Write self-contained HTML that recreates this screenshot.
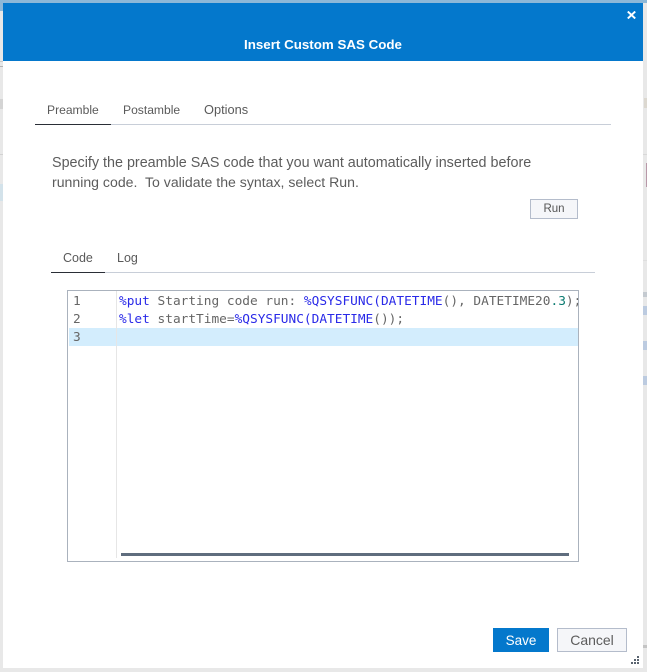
<!DOCTYPE html>
<html>
<head>
<meta charset="utf-8">
<style>
html,body{margin:0;padding:0;width:647px;height:672px;overflow:hidden;background:#e8e8e8;}
body{position:relative;font-family:"Liberation Sans",sans-serif;color:#555;}
.a{position:absolute;white-space:pre;}
.code{font-family:"DejaVu Sans Mono","Liberation Mono",monospace;font-size:12.8px;line-height:18px;height:18px;color:#666;}
.b{color:#2a2ae8;}
.t{color:#0a7a70;}
</style>
</head>
<body>
<!-- backdrop -->
<div class="a" style="left:0;top:0;width:647px;height:3px;background:#8db8d8;"></div>
<div class="a" style="left:0;top:3px;width:3px;height:8px;background:#8db8d8;"></div>
<div class="a" style="left:0;top:61px;width:3px;height:1px;background:#c8c8c8;"></div>
<div class="a" style="left:0;top:66px;width:3px;height:1px;background:#b4b4b4;"></div>
<div class="a" style="left:0;top:99px;width:3px;height:10px;background:#d4d4d4;"></div>
<div class="a" style="left:0;top:154px;width:3px;height:1px;background:#d2d2d2;"></div>
<div class="a" style="left:0;top:184px;width:3px;height:17px;background:#d3e2ea;"></div>
<div class="a" style="left:644px;top:98px;width:3px;height:10px;background:#dcd8d0;"></div>
<div class="a" style="left:643px;top:154px;width:4px;height:1px;background:#d8d8d8;"></div>
<div class="a" style="left:646px;top:163px;width:1px;height:24px;background:#b898a8;"></div>
<div class="a" style="left:643px;top:260px;width:4px;height:1px;background:#dedede;"></div>
<div class="a" style="left:643px;top:292px;width:4px;height:5px;background:#c4cad0;"></div>
<div class="a" style="left:643px;top:306px;width:4px;height:9px;background:#bccbe0;"></div>
<div class="a" style="left:643px;top:341px;width:4px;height:9px;background:#bccbe0;"></div>
<div class="a" style="left:643px;top:376px;width:4px;height:9px;background:#bccbe0;"></div>
<div class="a" style="left:643px;top:645px;width:4px;height:3px;background:#c4c4c4;"></div>

<!-- dialog -->
<div class="a" style="left:3px;top:3px;width:640px;height:665px;background:#fff;"></div>
<div class="a" style="left:3px;top:3px;width:640px;height:58px;background:#0478cc;"></div>
<div class="a" style="left:3px;top:37px;width:640px;text-align:center;color:#fff;font-weight:bold;font-size:13.35px;line-height:16px;">Insert Custom SAS Code</div>
<svg class="a" style="left:627px;top:11px;" width="9" height="8" viewBox="0 0 9 8"><path d="M0.8 0.5L8.2 7.5M8.2 0.5L0.8 7.5" stroke="#fff" stroke-width="1.9" fill="none"/></svg>

<!-- top tabs -->
<div class="a" style="left:47px;top:102px;font-size:12.1px;line-height:16px;color:#5a5a5a;">Preamble</div>
<div class="a" style="left:123px;top:102px;font-size:12.1px;line-height:16px;color:#5a5a5a;">Postamble</div>
<div class="a" style="left:204px;top:102px;font-size:12.8px;line-height:16px;color:#5a5a5a;">Options</div>
<div class="a" style="left:35px;top:124px;width:576px;height:1px;background:#c8ced8;"></div>
<div class="a" style="left:35px;top:124px;width:76px;height:1px;background:#2a2e36;"></div>

<!-- description -->
<div class="a" style="left:52px;top:153px;font-size:14.35px;line-height:20px;color:#5c5c5c;">Specify the preamble SAS code that you want automatically inserted before</div>
<div class="a" style="left:52px;top:172px;font-size:14.1px;line-height:20px;color:#5c5c5c;">running code.  To validate the syntax, select Run.</div>

<!-- Run -->
<div class="a" style="left:530px;top:199px;width:46px;height:18px;border:1px solid #b4bccb;background:#f5f6f9;text-align:center;font-size:11.5px;line-height:19px;color:#555;">Run</div>

<!-- lower tabs -->
<div class="a" style="left:63px;top:250px;font-size:12.5px;line-height:16px;color:#5a5a5a;">Code</div>
<div class="a" style="left:117px;top:250px;font-size:12.5px;line-height:16px;color:#5a5a5a;">Log</div>
<div class="a" style="left:51px;top:272px;width:544px;height:1px;background:#c8ced8;"></div>
<div class="a" style="left:51px;top:272px;width:54px;height:1px;background:#2a2e36;"></div>

<!-- editor -->
<div class="a" style="left:67px;top:290px;width:510px;height:270px;border:1px solid #aab2bd;background:#fff;overflow:hidden;">
  <div class="a" style="left:1px;top:37px;width:509px;height:18px;background:#d3edfd;"></div>
  <div class="a" style="left:48px;top:0;width:1px;height:267px;background:#e6e6e6;"></div>
  <div class="a code" style="left:5px;top:2px;">1</div>
  <div class="a code" style="left:5px;top:20px;">2</div>
  <div class="a code" style="left:5px;top:38px;">3</div>
  <div class="a code" style="left:51px;top:2px;"><span class="b">%put</span> Starting code run: <span class="b">%QSYSFUNC(DATETIME</span>(), DATETIME20<span class="t">.3</span>);</div>
  <div class="a code" style="left:51px;top:20px;"><span class="b">%let</span> startTime=<span class="b">%QSYSFUNC(DATETIME</span>());</div>
  <div class="a" style="left:53px;top:262px;width:448px;height:3px;background:#5f6d7e;"></div>
</div>

<!-- footer -->
<div class="a" style="left:493px;top:628px;width:56px;height:24px;background:#0478cc;color:#fff;text-align:center;font-size:13.5px;line-height:25px;">Save</div>
<div class="a" style="left:557px;top:628px;width:68px;height:22px;border:1px solid #b4bccb;background:#f5f6f9;color:#5c5c5c;text-align:center;font-size:14px;line-height:22px;">Cancel</div>

<!-- resize grip -->
<svg class="a" style="left:631px;top:656px;" width="9" height="9" viewBox="0 0 9 9" fill="#5a6470"><rect x="6" y="0" width="2" height="2"/><rect x="3" y="3" width="2" height="2"/><rect x="6" y="3" width="2" height="2"/><rect x="0" y="6" width="2" height="2"/><rect x="3" y="6" width="2" height="2"/><rect x="6" y="6" width="2" height="2"/></svg>
</body>
</html>
